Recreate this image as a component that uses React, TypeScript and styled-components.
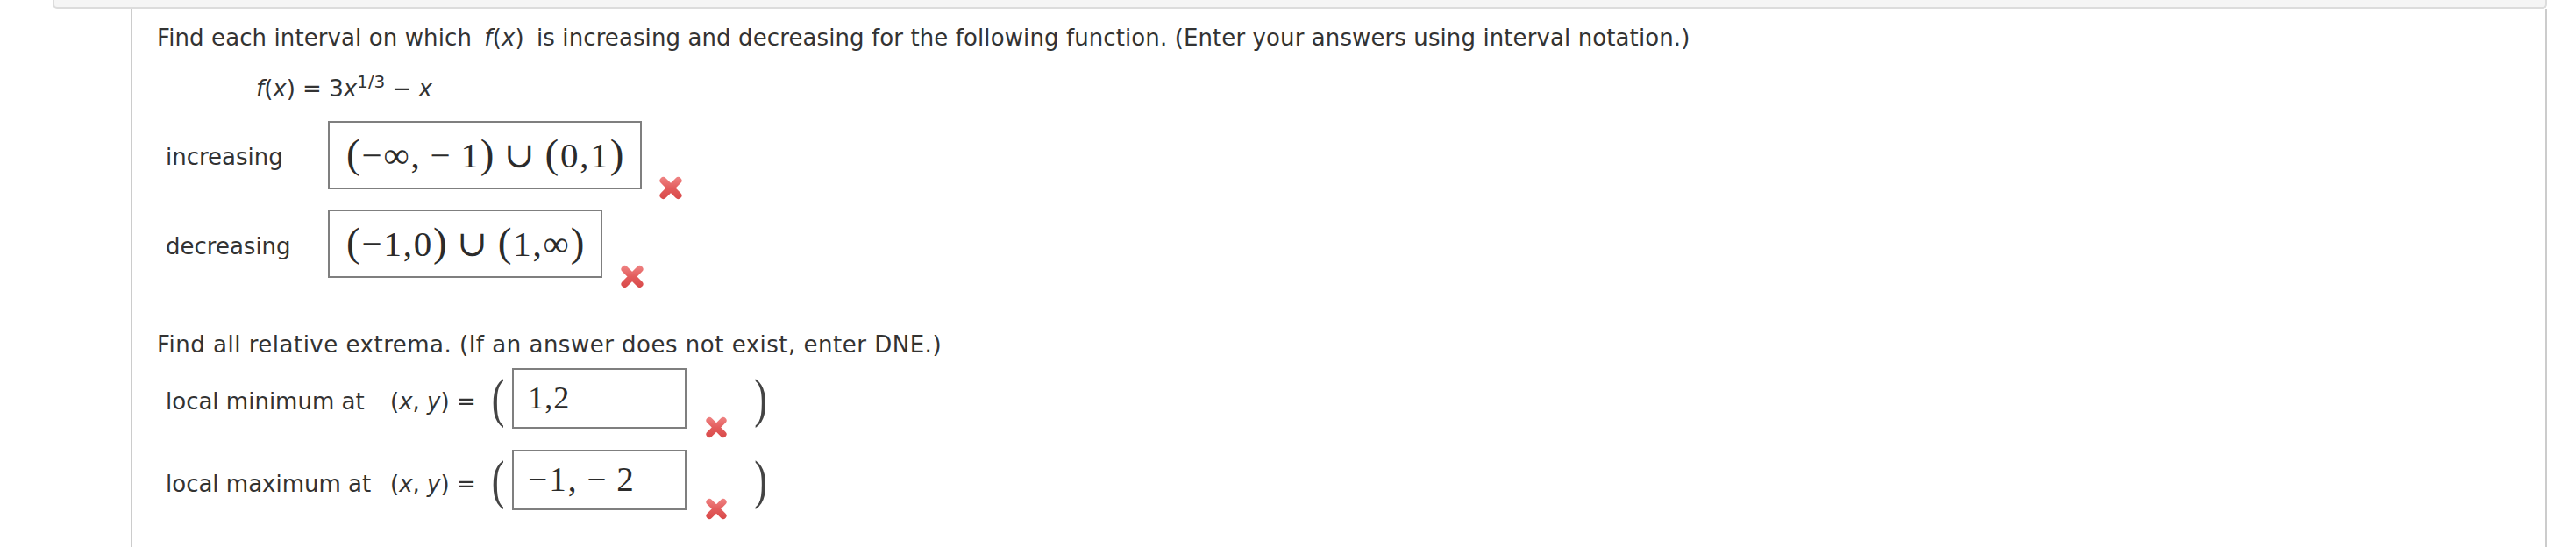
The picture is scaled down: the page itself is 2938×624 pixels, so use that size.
import React from "react";
import styled, { createGlobalStyle } from "styled-components";

const GlobalStyle = createGlobalStyle`
  html, body {
    margin: 0;
    padding: 0;
    background: #ffffff;
  }
  body {
    font-family: "DejaVu Sans", Verdana, sans-serif;
    color: #333333;
  }
`;

const Page = styled.div`
  width: 2938px;
  height: 624px;
  overflow: hidden;
  display: flex;
  flex-direction: column;
`;

const TopBar = styled.div`
  box-sizing: border-box;
  margin-left: 60px;
  width: 2845px;
  height: 10px;
  background: #f5f5f5;
  border: 2px solid #dcdcdc;
  border-top: none;
  border-radius: 0 0 5px 5px;
`;

const Panel = styled.div`
  box-sizing: border-box;
  flex: 1;
  margin-left: 149px;
  width: 2756px;
  border-left: 2px solid #cccccc;
  border-right: 2px solid #cccccc;
  padding: 15px 0 0 28px;
`;

const Prompt = styled.div<{ $top?: number; $track: number }>`
  font-size: 26px;
  line-height: 36px;
  letter-spacing: ${(p) => p.$track}px;
  margin-top: ${(p) => p.$top ?? 0}px;
  white-space: nowrap;
`;

const Inline = styled.span`
  margin: 0 6px;
`;

const Var = styled.i`
  font-style: italic;
`;

const Formula = styled.div`
  font-size: 26px;
  line-height: 36px;
  margin-top: 22px;
  padding-left: 113px;
  white-space: nowrap;
`;

const Sup = styled.span`
  font-size: 20px;
  line-height: 0;
  vertical-align: 10px;
`;

const AnswerRow = styled.div<{ $top: number }>`
  display: flex;
  align-items: flex-start;
  margin-top: ${(p) => p.$top}px;
  padding-left: 10px;
`;

const Label = styled.div<{ $width: number; $drop: number }>`
  width: ${(p) => p.$width}px;
  flex-shrink: 0;
  font-size: 26px;
  line-height: 36px;
  margin-top: ${(p) => p.$drop}px;
  white-space: nowrap;
`;

const Coord = styled.div<{ $drop: number }>`
  font-size: 26px;
  line-height: 36px;
  margin-top: ${(p) => p.$drop}px;
  white-space: nowrap;
`;

const IntervalBox = styled.div`
  box-sizing: border-box;
  height: 78px;
  display: flex;
  align-items: center;
  padding: 0 17px 0 19px;
  border: 2px solid #7f7f7f;
`;

const InputBox = styled.div`
  box-sizing: border-box;
  width: 199px;
  height: 69px;
  margin-left: 9px;
  display: flex;
  align-items: center;
  padding-left: 16px;
  border: 2px solid #7f7f7f;
`;

const MathText = styled.span<{ $size: number; $track: number }>`
  font-family: "Liberation Serif", "DejaVu Serif", serif;
  font-size: ${(p) => p.$size}px;
  letter-spacing: ${(p) => p.$track}px;
  line-height: 1.2;
  color: #2b2b2b;
  white-space: pre;
`;

const Delim = styled.span`
  font-size: 1.15em;
  line-height: 1;
`;

const BigParen = styled.span<{ $gap: number }>`
  height: 69px;
  display: flex;
  align-items: center;
  margin-left: ${(p) => p.$gap}px;
  font-family: "Liberation Serif", "DejaVu Serif", serif;
  font-size: 44px;
  line-height: 1;
  color: #444444;
  transform: scaleY(1.4);
`;

const Mark = styled.svg<{ $gap: number; $drop: number }>`
  flex-shrink: 0;
  display: block;
  margin-left: ${(p) => p.$gap}px;
  margin-top: ${(p) => p.$drop}px;
`;

function WrongMark({ size, gap, drop }: { size: number; gap: number; drop: number }) {
  return (
    <Mark $gap={gap} $drop={drop} width={size} height={size - 1} viewBox="0 0 28 27">
      <defs>
        <linearGradient id="wrongGrad" x1="0" y1="0" x2="0" y2="27" gradientUnits="userSpaceOnUse">
          <stop offset="0" stopColor="#f08686" />
          <stop offset="0.5" stopColor="#e35d5d" />
          <stop offset="1" stopColor="#d84848" />
        </linearGradient>
      </defs>
      <path
        d="M5.5 5 L22.5 22 M22.5 5 L5.5 22"
        stroke="url(#wrongGrad)"
        strokeWidth="8"
        strokeLinecap="round"
        fill="none"
      />
    </Mark>
  );
}

const T = "\u2009";

export default function App() {
  return (
    <Page>
      <GlobalStyle />
      <TopBar />
      <Panel>
        <Prompt $track={0.1}>
          Find each interval on which
          <Inline>
            {" "}
            <Var>f</Var>(<Var>x</Var>){" "}
          </Inline>
          is increasing and decreasing for the following function. (Enter your answers using interval
          notation.)
        </Prompt>
        <Formula>
          <Var>f</Var>(<Var>x</Var>) = 3<Var>x</Var>
          <Sup>1/3</Sup> − <Var>x</Var>
        </Formula>

        <AnswerRow $top={19}>
          <Label $width={185} $drop={23}>
            increasing
          </Label>
          <IntervalBox>
            <MathText $size={41} $track={1.8}>
              <Delim>(</Delim>−∞,{T}−{T}1<Delim>)</Delim>
              {T}∪{T}
              <Delim>(</Delim>0,1<Delim>)</Delim>
            </MathText>
          </IntervalBox>
          <WrongMark size={28} gap={19} drop={63} />
        </AnswerRow>

        <AnswerRow $top={11}>
          <Label $width={185} $drop={24}>
            decreasing
          </Label>
          <IntervalBox>
            <MathText $size={41} $track={1.8}>
              <Delim>(</Delim>−1,0<Delim>)</Delim>
              {T}∪{T}
              <Delim>(</Delim>1,∞<Delim>)</Delim>
            </MathText>
          </IntervalBox>
          <WrongMark size={28} gap={20} drop={63} />
        </AnswerRow>

        <Prompt $top={46} $track={0.5}>
          Find all relative extrema. (If an answer does not exist, enter DNE.)
        </Prompt>

        <AnswerRow $top={9}>
          <Label $width={256} $drop={20}>
            local minimum at
          </Label>
          <Coord $drop={20}>
            (<Var>x</Var>, <Var>y</Var>) =
          </Coord>
          <BigParen $gap={18}>(</BigParen>
          <InputBox>
            <MathText $size={36} $track={1}>
              1,2
            </MathText>
          </InputBox>
          <WrongMark size={26} gap={21} drop={55} />
          <BigParen $gap={30}>)</BigParen>
        </AnswerRow>

        <AnswerRow $top={13}>
          <Label $width={256} $drop={21}>
            local maximum at
          </Label>
          <Coord $drop={21}>
            (<Var>x</Var>, <Var>y</Var>) =
          </Coord>
          <BigParen $gap={18}>(</BigParen>
          <InputBox>
            <MathText $size={39} $track={2}>
              −1,{T}−{T}2
            </MathText>
          </InputBox>
          <WrongMark size={26} gap={21} drop={55} />
          <BigParen $gap={30}>)</BigParen>
        </AnswerRow>
      </Panel>
    </Page>
  );
}
